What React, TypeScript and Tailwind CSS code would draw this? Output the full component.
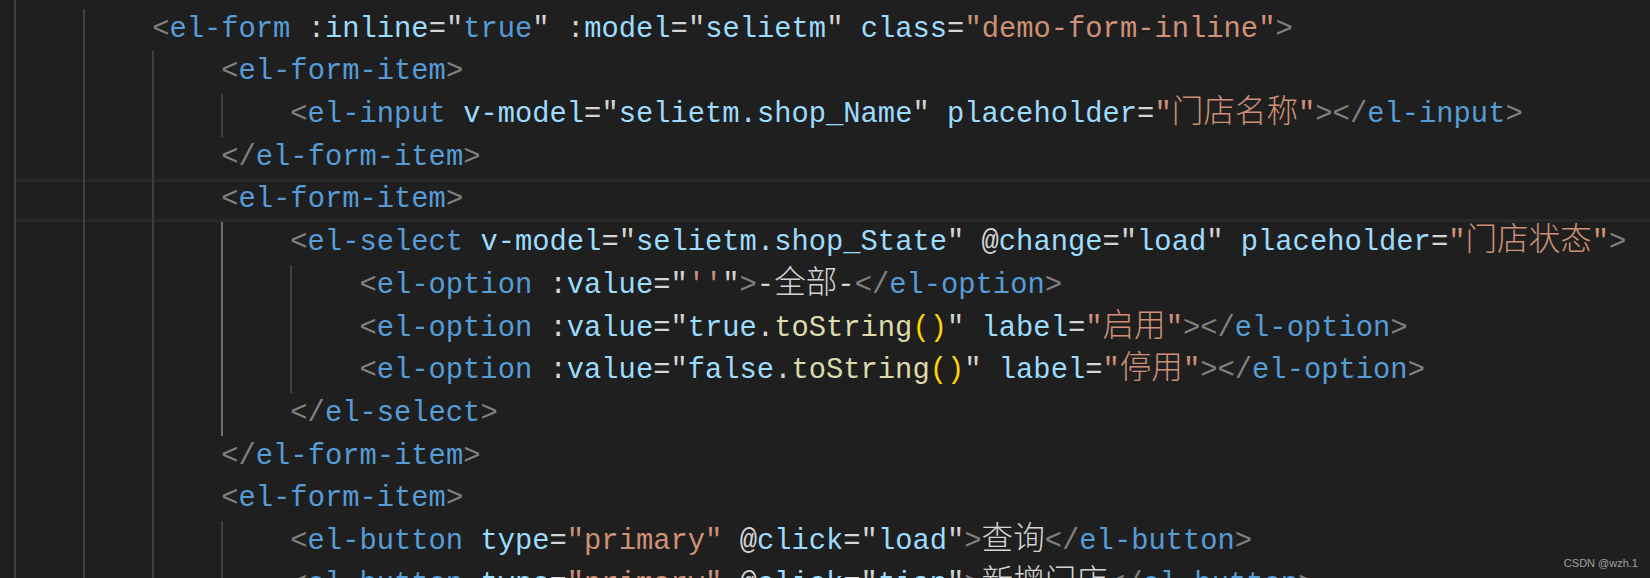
import React from "react";

type Tok = [string, string];
type Row = { lvl: number; active?: boolean; cur?: boolean; toks: Tok[] };

const COLOR: Record<string, string> = {
  p: "text-[#808080]",
  t: "text-[#569cd6]",
  a: "text-[#9cdcfe]",
  w: "text-[#d4d4d4]",
  s: "text-[#ce9178]",
  f: "text-[#dcdcaa]",
  b: "text-[#ffd700]",
  sc: "text-[#ce9178] text-[31.6px] leading-[0px] font-light font-['Noto_Sans_CJK_SC',sans-serif]",
  wc: "text-[#d4d4d4] text-[31.6px] leading-[0px] font-light font-['Noto_Sans_CJK_SC',sans-serif]",
};

const open = (name: string): Tok[] => [["<", "p"], [name, "t"], [">", "p"]];
const close = (name: string): Tok[] => [["</", "p"], [name, "t"], [">", "p"]];

const rows: Row[] = [
  {
    lvl: 2,
    toks: [
      ["<", "p"], ["el-form", "t"], [" ", "w"], [":", "w"], ["inline", "a"], ["=", "w"], ['"', "w"], ["true", "t"], ['"', "w"],
      [" ", "w"], [":", "w"], ["model", "a"], ["=", "w"], ['"', "w"], ["selietm", "a"], ['"', "w"],
      [" ", "w"], ["class", "a"], ["=", "w"], ['"demo-form-inline"', "s"], [">", "p"],
    ],
  },
  { lvl: 3, toks: open("el-form-item") },
  {
    lvl: 4,
    toks: [
      ["<", "p"], ["el-input", "t"], [" ", "w"], ["v-model", "a"], ["=", "w"], ['"', "w"], ["selietm.shop_Name", "a"], ['"', "w"],
      [" ", "w"], ["placeholder", "a"], ["=", "w"], ['"', "s"], ["门店名称", "sc"], ['"', "s"], ["></", "p"], ["el-input", "t"], [">", "p"],
    ],
  },
  { lvl: 3, toks: close("el-form-item") },
  { lvl: 3, cur: true, toks: open("el-form-item") },
  {
    lvl: 4,
    active: true,
    toks: [
      ["<", "p"], ["el-select", "t"], [" ", "w"], ["v-model", "a"], ["=", "w"], ['"', "w"], ["selietm.shop_State", "a"], ['"', "w"],
      [" ", "w"], ["@", "w"], ["change", "a"], ["=", "w"], ['"', "w"], ["load", "a"], ['"', "w"],
      [" ", "w"], ["placeholder", "a"], ["=", "w"], ['"', "s"], ["门店状态", "sc"], ['"', "s"], [">", "p"],
    ],
  },
  {
    lvl: 5,
    active: true,
    toks: [
      ["<", "p"], ["el-option", "t"], [" ", "w"], [":", "w"], ["value", "a"], ["=", "w"], ['"', "w"], ["''", "s"], ['"', "w"], [">", "p"],
      ["-", "w"], ["全部", "wc"], ["-", "w"], ["</", "p"], ["el-option", "t"], [">", "p"],
    ],
  },
  {
    lvl: 5,
    active: true,
    toks: [
      ["<", "p"], ["el-option", "t"], [" ", "w"], [":", "w"], ["value", "a"], ["=", "w"], ['"', "w"], ["true", "a"], [".", "w"], ["toString", "f"], ["()", "b"], ['"', "w"],
      [" ", "w"], ["label", "a"], ["=", "w"], ['"', "s"], ["启用", "sc"], ['"', "s"], ["></", "p"], ["el-option", "t"], [">", "p"],
    ],
  },
  {
    lvl: 5,
    active: true,
    toks: [
      ["<", "p"], ["el-option", "t"], [" ", "w"], [":", "w"], ["value", "a"], ["=", "w"], ['"', "w"], ["false", "a"], [".", "w"], ["toString", "f"], ["()", "b"], ['"', "w"],
      [" ", "w"], ["label", "a"], ["=", "w"], ['"', "s"], ["停用", "sc"], ['"', "s"], ["></", "p"], ["el-option", "t"], [">", "p"],
    ],
  },
  { lvl: 4, active: true, toks: close("el-select") },
  { lvl: 3, toks: close("el-form-item") },
  { lvl: 3, toks: open("el-form-item") },
  {
    lvl: 4,
    toks: [
      ["<", "p"], ["el-button", "t"], [" ", "w"], ["type", "a"], ["=", "w"], ['"primary"', "s"], [" ", "w"], ["@", "w"], ["click", "a"], ["=", "w"],
      ['"', "w"], ["load", "a"], ['"', "w"], [">", "p"], ["查询", "wc"], ["</", "p"], ["el-button", "t"], [">", "p"],
    ],
  },
  {
    lvl: 4,
    toks: [
      ["<", "p"], ["el-button", "t"], [" ", "w"], ["type", "a"], ["=", "w"], ['"primary"', "s"], [" ", "w"], ["@", "w"], ["click", "a"], ["=", "w"],
      ['"', "w"], ["tian", "a"], ['"', "w"], [">", "p"], ["新增门店", "wc"], ["</", "p"], ["el-button", "t"], [">", "p"],
    ],
  },
];

function Guide({ active }: { active?: boolean }) {
  return (
    <span
      className={
        active
          ? "w-[69.08px] shrink-0 border-l-2 border-[#707070]"
          : "w-[69.08px] shrink-0 border-l-2 border-[#404040]"
      }
    />
  );
}

export default function App() {
  return (
    <div className="relative w-[1650px] h-[578px] overflow-hidden bg-[#1f1f1f] font-['Liberation_Mono','Noto_Sans_CJK_SC',monospace] text-[28.8px] text-[#d4d4d4]">
      <div className="pl-[14px]">
        <div className="flex h-[8.7px]">
          <Guide />
        </div>
        {rows.map((r, i) => (
          <div
            key={i}
            className={
              r.cur
                ? "flex h-[42.7px] shadow-[inset_0_3px_0_#282828,inset_0_-3px_0_#282828]"
                : "flex h-[42.7px]"
            }
          >
            {Array.from({ length: r.lvl }).map((_, k) => (
              <Guide key={k} active={r.active && k === 3} />
            ))}
            <span className="whitespace-pre leading-[42.7px]">
              {r.toks.map(([txt, c], j) => (
                <span key={j} className={COLOR[c]}>
                  {txt}
                </span>
              ))}
            </span>
          </div>
        ))}
      </div>
      <div className="absolute right-[12px] bottom-[9px] text-[11px] leading-none text-[#a0a0a0] font-['Liberation_Sans',sans-serif]">
        CSDN @wzh.1
      </div>
    </div>
  );
}
